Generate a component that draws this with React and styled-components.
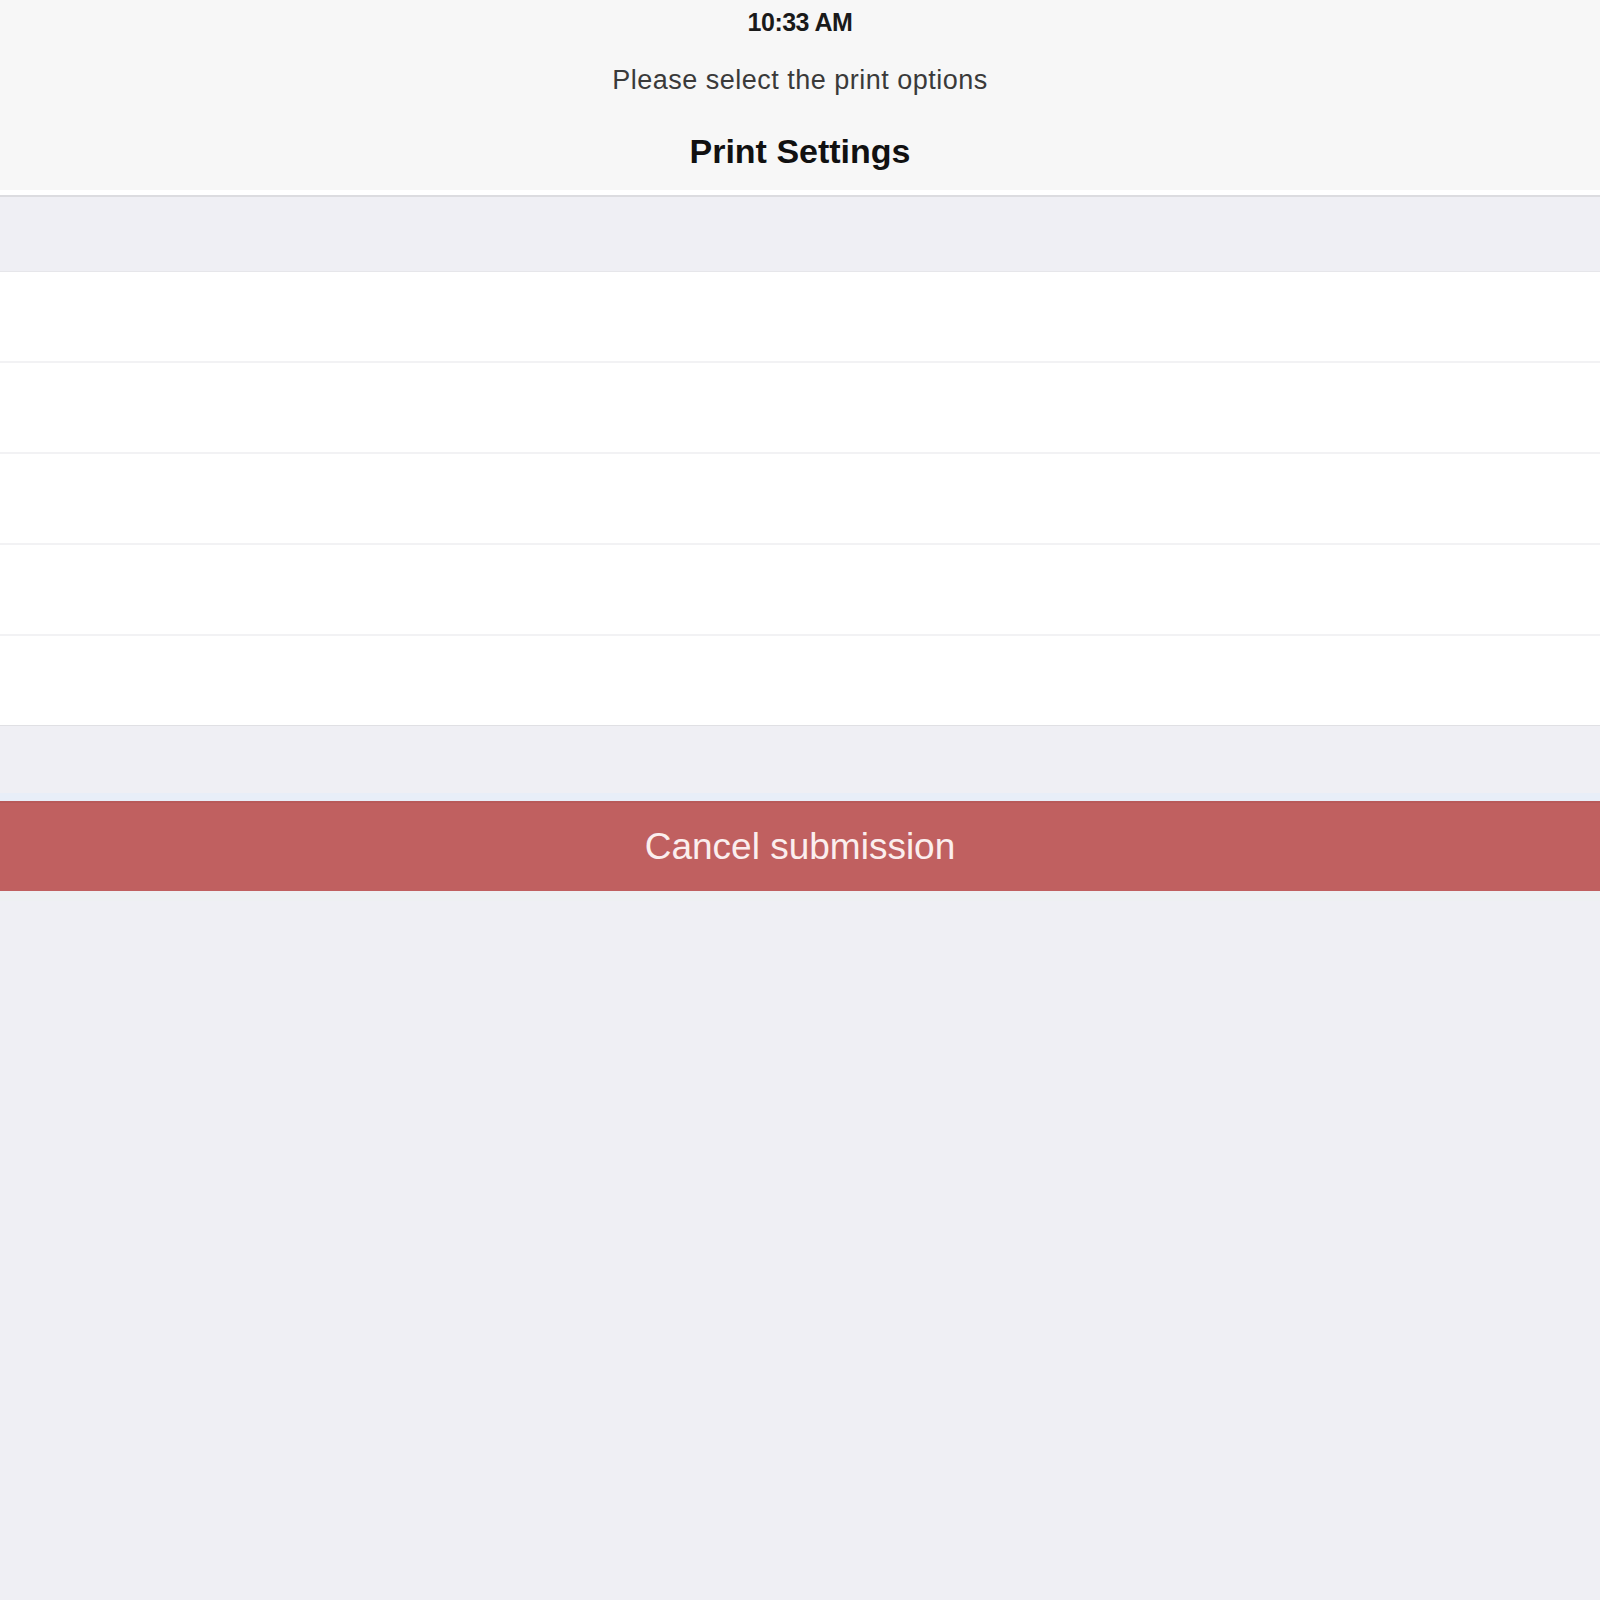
import styled, { createGlobalStyle } from 'styled-components';

const GlobalStyle = createGlobalStyle`
    html, body {
        margin: 0;
        padding: 0;
        background: #efeff4;
        font-family: "Liberation Sans", Arial, sans-serif;
    }
`;

const Screen = styled.div`
    width: 1600px;
    min-height: 1600px;
    background: #efeff4;
    display: flex;
    flex-direction: column;
`;

const Header = styled.header`
    background: #f7f7f7;
    height: 190px;
    display: flex;
    flex-direction: column;
    align-items: center;
    border-bottom: 5px solid #ffffff;
    box-shadow: 0 2px 0 #dcdce0;
`;

const Time = styled.div`
    margin-top: 7px;
    font-size: 25px;
    line-height: 30px;
    font-weight: bold;
    color: #1a1a1a;
    letter-spacing: -0.5px;
`;

const Prompt = styled.div`
    margin-top: 27px;
    font-size: 27px;
    line-height: 32px;
    color: #3a3a3a;
    letter-spacing: 0.5px;
`;

const Title = styled.h1`
    margin: 35px 0 0;
    font-size: 34px;
    line-height: 40px;
    font-weight: bold;
    color: #111111;
`;

const Spacer = styled.div`
    height: ${(p) => p.h}px;
`;

const List = styled.div`
    background: #ffffff;
    display: flex;
    flex-direction: column;
    border-top: 1px solid #e6e6ea;
    border-bottom: 1px solid #e0e0e4;
`;

const Row = styled.div`
    height: 89px;
    border-bottom: ${(p) => (p.last ? 'none' : '2px solid #f2f2f4')};
`;

const CancelButton = styled.button`
    width: 100%;
    height: 90px;
    border: none;
    background: #c06060;
    color: #fbeeee;
    font-family: "Liberation Sans", Arial, sans-serif;
    font-size: 37px;
    padding: 0;
    border-top: 2px solid #b85a5a;
    box-shadow: 0 -8px 0 #e8eef8, 0 10px 0 #eef0f2;
    cursor: pointer;
`;

const App = () => {
    const rows = [0, 1, 2, 3, 4];

    return (
        <Screen>
            <GlobalStyle />
            <Header>
                <Time>10:33 AM</Time>
                <Prompt>Please select the print options</Prompt>
                <Title>Print Settings</Title>
            </Header>
            <Spacer h={76} />
            <List>
                {rows.map((r) => (
                    <Row key={r} last={r === rows.length - 1} />
                ))}
            </List>
            <Spacer h={75} />
            <CancelButton>Cancel submission</CancelButton>
        </Screen>
    );
};

export default App;
